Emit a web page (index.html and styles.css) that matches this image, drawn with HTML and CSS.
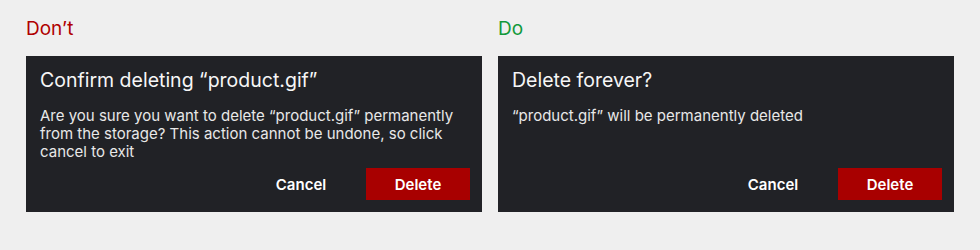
FILE: index.html
```html
<!DOCTYPE html>
<html lang="en">
<head>
<meta charset="utf-8">
<title>Delete dialog guidelines</title>
<link rel="stylesheet" href="styles.css">
</head>
<body>
<main class="page">
  <section class="column">
    <h2 class="label label-dont">Don’t</h2>
    <div class="dialog">
      <h3 class="dialog-title">Confirm deleting “product.gif”</h3>
      <p class="dialog-body">Are you sure you want to delete “product.gif” permanently from the storage? This action cannot be undone, so click cancel to exit</p>
      <div class="dialog-actions">
        <button class="btn btn-cancel">Cancel</button>
        <button class="btn btn-delete">Delete</button>
      </div>
    </div>
  </section>
  <section class="column">
    <h2 class="label label-do">Do</h2>
    <div class="dialog">
      <h3 class="dialog-title">Delete forever?</h3>
      <p class="dialog-body">“product.gif” will be permanently deleted</p>
      <div class="dialog-actions">
        <button class="btn btn-cancel">Cancel</button>
        <button class="btn btn-delete">Delete</button>
      </div>
    </div>
  </section>
</main>
</body>
</html>
```
FILE: styles.css
```css
html, body {
  margin: 0;
  padding: 0;
  background: #efefef;
}
body {
  font-family: Inter, "Noto Sans", "Liberation Sans", sans-serif;
}
.page {
  display: grid;
  grid-template-columns: 456px 456px;
  column-gap: 16px;
  padding: 17px 26px 0 26px;
}
.column {
  display: flex;
  flex-direction: column;
}
.label {
  margin: 0 0 15px 0;
  font-size: 19px;
  line-height: 24px;
  font-weight: 400;
}
.label-dont { color: #b00000; }
.label-do { color: #12993b; }
.dialog {
  background: #212226;
  height: 156px;
  box-sizing: border-box;
  padding: 12px 12px 12px 14px;
  display: flex;
  flex-direction: column;
}
.dialog-title {
  margin: 0 0 15px 0;
  font-size: 19.5px;
  line-height: 24px;
  font-weight: 400;
  color: #f6f6f6;
}
.dialog-body {
  margin: 0;
  font-size: 15px;
  line-height: 18px;
  color: #e8e8e8;
}
.dialog-actions {
  margin-top: auto;
  display: flex;
  justify-content: flex-end;
  gap: 13px;
}
.btn {
  width: 104px;
  height: 32px;
  border: 0;
  padding: 0;
  font-family: inherit;
  font-size: 15px;
  font-weight: 600;
  color: #ffffff;
  background: transparent;
}
.btn-delete {
  background: #a80000;
}
```
